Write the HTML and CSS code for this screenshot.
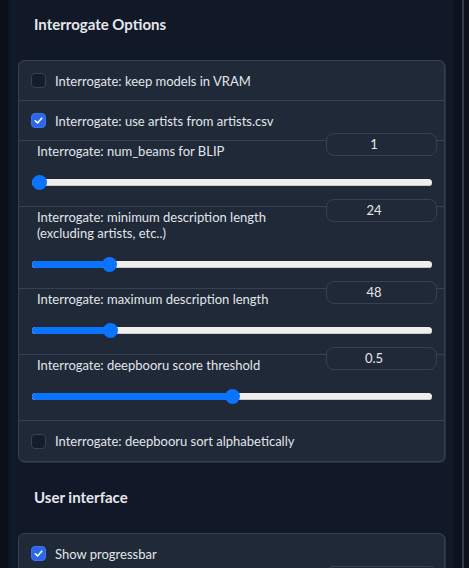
FILE: index.html
```html
<!DOCTYPE html>
<html lang="en">
<head>
<meta charset="utf-8">
<title>Settings</title>
<link rel="stylesheet" href="styles.css">
</head>
<body>
<div class="screen">
  <main class="page">
    <section class="section">
      <h2 class="section-title">Interrogate Options</h2>
      <div class="card">
        <label class="check-row">
          <span class="box"></span>
          <span class="check-text">Interrogate: keep models in VRAM</span>
        </label>
        <label class="check-row">
          <span class="box checked"><svg viewBox="0 0 16 16"><path d="M4 8.3 6.8 11 12 5.2"/></svg></span>
          <span class="check-text">Interrogate: use artists from artists.csv</span>
        </label>
        <div class="slider-row">
          <div class="slider-head">
            <span class="slider-label">Interrogate: num_beams for BLIP</span>
            <span class="num">1</span>
          </div>
          <div class="track" style="--v:0"><span class="fill"></span><span class="thumb"></span></div>
        </div>
        <div class="slider-row">
          <div class="slider-head">
            <span class="slider-label">Interrogate: minimum description length<br>(excluding artists, etc..)</span>
            <span class="num">24</span>
          </div>
          <div class="track" style="--v:0.181"><span class="fill"></span><span class="thumb"></span></div>
        </div>
        <div class="slider-row">
          <div class="slider-head">
            <span class="slider-label">Interrogate: maximum description length</span>
            <span class="num">48</span>
          </div>
          <div class="track" style="--v:0.184"><span class="fill"></span><span class="thumb"></span></div>
        </div>
        <div class="slider-row">
          <div class="slider-head">
            <span class="slider-label">Interrogate: deepbooru score threshold</span>
            <span class="num">0.5</span>
          </div>
          <div class="track" style="--v:0.5"><span class="fill"></span><span class="thumb"></span></div>
        </div>
        <label class="check-row">
          <span class="box"></span>
          <span class="check-text">Interrogate: deepbooru sort alphabetically</span>
        </label>
      </div>
    </section>
    <section class="section">
      <h2 class="section-title">User interface</h2>
      <div class="card">
        <label class="check-row">
          <span class="box checked"><svg viewBox="0 0 16 16"><path d="M4 8.3 6.8 11 12 5.2"/></svg></span>
          <span class="check-text">Show progressbar</span>
        </label>
        <div class="slider-row">
          <div class="slider-head">
            <span class="slider-label"></span>
            <span class="num"></span>
          </div>
        </div>
      </div>
    </section>
  </main>
  <div class="rail"><span class="rail-line"></span></div>
</div>
</body>
</html>
```

FILE: styles.css
```css
* { box-sizing: border-box; }

html, body {
  margin: 0;
  padding: 0;
  height: 100%;
  overflow: hidden;
  background: #0b0f19;
  font-family: Lato, "Noto Sans", sans-serif;
}

.screen {
  display: flex;
  height: 568px;
  padding-left: 8px;
}

.page {
  width: 445px;
  flex: none;
  background: #111827;
  border-left: 2px solid #0e1320;
  padding: 12px 8px 0 8px;
  overflow: hidden;
}

.rail {
  flex: 1;
  display: flex;
  padding-left: 9px;
  background: #0d111b;
}

.rail-line {
  width: 2px;
  background: #353b48;
}

.section + .section {
  margin-top: 23px;
}

.section-title {
  margin: 0 0 24px 16px;
  font-size: 15px;
  line-height: 24px;
  font-weight: 700;
  color: #e5e7eb;
}

.card {
  background: #1f2937;
  border: 1px solid #374151;
  border-radius: 6px;
  box-shadow: 1px 1px 0 rgba(80, 90, 110, 0.35);
}

.check-row {
  display: flex;
  align-items: center;
  gap: 9px;
  height: 40px;
  padding-left: 12px;
  border-bottom: 1px solid #374151;
  color: #e1e5eb;
  font-size: 13px;
  line-height: 16px;
}

.card > :last-child {
  border-bottom: none;
}

.box {
  width: 15px;
  height: 15px;
  flex: none;
  border-radius: 4px;
  background: #151c2b;
  border: 1px solid #384252;
  display: flex;
  align-items: center;
  justify-content: center;
}

.box.checked {
  background: #2b67e8;
  border-color: #3b76f0;
}

.box svg {
  width: 15px;
  height: 15px;
  fill: none;
  stroke: #ffffff;
  stroke-width: 2;
  stroke-linecap: round;
  stroke-linejoin: round;
}

.slider-row {
  padding: 2px 0 16px 0;
  border-bottom: 1px solid #374151;
}

.slider-head {
  display: flex;
  align-items: flex-start;
  justify-content: space-between;
  gap: 16px;
  padding-left: 18px;
  padding-right: 7px;
}

.slider-label {
  color: #e1e5eb;
  font-size: 13px;
  line-height: 16px;
}

.num {
  flex: none;
  width: 111px;
  height: 23px;
  margin-top: -10px;
  padding-right: 15px;
  border: 1px solid #374151;
  border-radius: 8px;
  background: #1f2937;
  color: #e5e7eb;
  font-size: 13px;
  line-height: 21px;
  text-align: center;
}

.track {
  position: relative;
  height: 15px;
  margin: 16px 12px 0 13px;
}

.track::before {
  content: "";
  position: absolute;
  left: 0;
  right: 0;
  top: 4px;
  height: 7px;
  border-radius: 4px;
  background: #efefef;
  box-shadow: inset 0 -1px 0 #c9c9c9;
}

.fill {
  position: absolute;
  left: 0;
  top: 4px;
  height: 7px;
  border-radius: 4px;
  background: #0a74ff;
  width: calc(var(--v) * (100% - 15px) + 7.5px);
}

.thumb {
  position: absolute;
  top: 0;
  left: calc(var(--v) * (100% - 15px));
  width: 15px;
  height: 15px;
  border-radius: 50%;
  background: #0a74ff;
}
```
